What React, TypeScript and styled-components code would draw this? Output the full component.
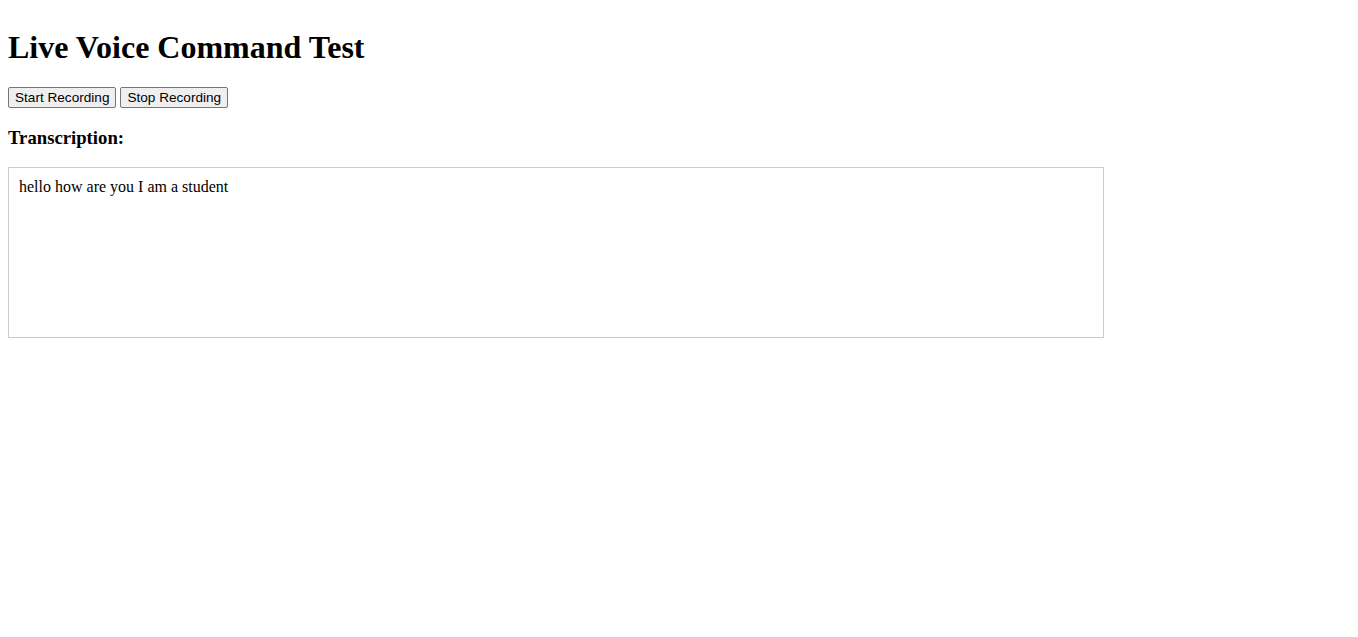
import React from "react";
import styled, { createGlobalStyle } from "styled-components";

const Global = createGlobalStyle`
  body {
    margin: 8px;
    font-family: "Liberation Serif", "Times New Roman", serif;
    color: #000;
    background: #fff;
  }
`;

const Title = styled.h1`
  font-size: 32px;
  font-weight: bold;
  margin: 21.44px 0 20.5px;
`;

const Controls = styled.div`
  display: flex;
  gap: 4px;
`;

const Button = styled.button`
  font-family: "Liberation Sans", Arial, sans-serif;
  font-size: 13.6px;
  padding: 2px 6px;
  border: 1px solid #767676;
  border-radius: 2px;
  background: #efefef;
  color: #000;
  line-height: normal;
`;

const Subtitle = styled.h3`
  font-size: 18.72px;
  font-weight: bold;
  margin: 18.72px 0;
`;

const Transcript = styled.div`
  width: 80%;
  min-height: 149px;
  padding: 10px;
  border: 1px solid #ccc;
  font-size: 16px;
`;

export default function App() {
  return (
    <>
      <Global />
      <Title>Live Voice Command Test</Title>
      <Controls>
        <Button>Start Recording</Button>
        <Button>Stop Recording</Button>
      </Controls>
      <Subtitle>Transcription:</Subtitle>
      <Transcript>hello how are you I am a student</Transcript>
    </>
  );
}
